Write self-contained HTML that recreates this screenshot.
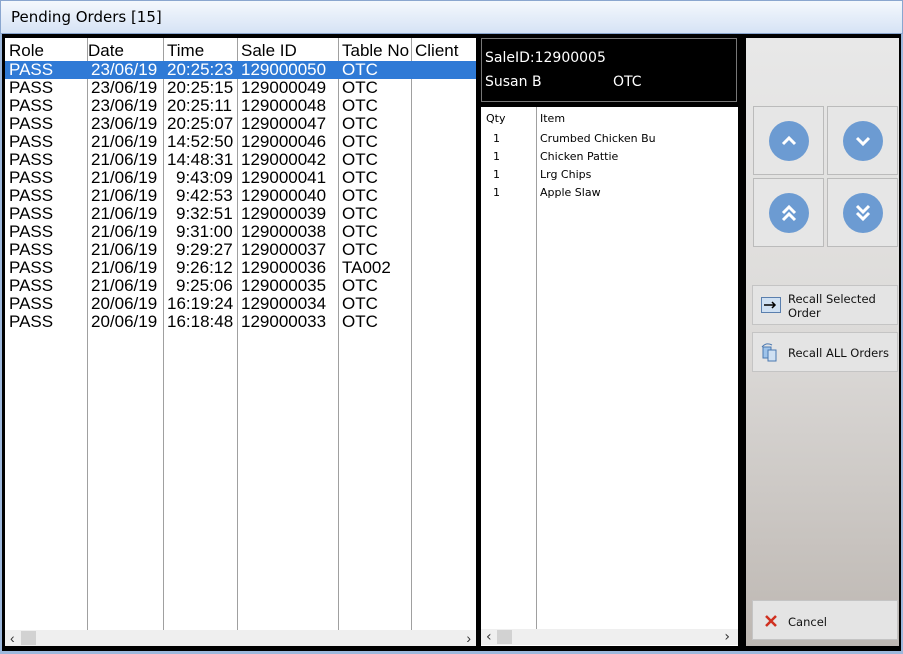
<!DOCTYPE html>
<html><head><style>
*{margin:0;padding:0;box-sizing:border-box}
body{width:903px;height:654px;overflow:hidden;background:#000;font-family:"Liberation Sans",sans-serif;position:relative}
.title{position:absolute;left:0;top:0;width:903px;height:34px;background:linear-gradient(#f4f8fd,#d6e3f5);border:1px solid #8aa6cf;font-family:"DejaVu Sans",sans-serif;font-size:15px;padding:7px 10px;color:#000}
.frame{position:absolute;left:0;top:34px;width:903px;height:620px;background:#000;border-left:2px solid #9db8dc;border-right:2px solid #9db8dc;border-bottom:3px solid #9db8dc}
.grid{position:absolute;left:5px;top:38px;width:471px;height:608px;background:#fff}
.col{position:absolute;top:0;height:592px;border-left:1px solid #a0a0a0}
.row{position:absolute;left:0;width:471px;height:18px;font-size:17px;line-height:18px;white-space:nowrap}
.row span{position:absolute;top:0}
.sel{background:#2f7ad6;color:#fff}
.hs{position:absolute;bottom:0;left:0;right:0;height:16px;background:#efefef;font-size:14px;line-height:14px;color:#333}
.info{position:absolute;left:481px;top:38px;width:256px;height:64px;background:#000;color:#fff;font-family:"DejaVu Sans",sans-serif;font-size:14px;border:1px solid #777}
.items{position:absolute;left:481px;top:107px;width:257px;height:539px;background:#fff;font-family:"DejaVu Sans",sans-serif;font-size:11px}
.items div{position:absolute}
.side{position:absolute;left:746px;top:38px;width:153px;height:608px;background:linear-gradient(#e8e8e8,#dcdad8 50%,#bdb7b2)}
.nb{position:absolute;width:71px;height:69px;background:#e6e6e6;border:1px solid #bbb}
.circ{position:absolute;left:15px;top:14px;width:40px;height:40px;border-radius:50%;background:#6c9bd2}
.btn{position:absolute;left:6px;width:146px;height:40px;background:#e4e4e4;border:1px solid #c4c4c4;font-family:"DejaVu Sans",sans-serif;font-size:11.5px;color:#111}
</style></head><body>
<div class="title">Pending Orders [15]</div>
<div class="frame"></div>
<div class="grid">
<div class="col" style="left:82px"></div><div class="col" style="left:158px"></div><div class="col" style="left:232px"></div><div class="col" style="left:333px"></div><div class="col" style="left:406px"></div>
<div class="row" style="top:4px"><span style="left:4px">Role</span><span style="left:83px">Date</span><span style="left:162px">Time</span><span style="left:236px">Sale ID</span><span style="left:337px">Table No</span><span style="left:410px">Client</span></div>
<div class="row sel" style="top:23px"><span style="left:4px">PASS</span><span style="left:86px">23/06/19</span><span style="left:162px">20:25:23</span><span style="left:236px">129000050</span><span style="left:337px">OTC</span></div>
<div class="row" style="top:41px"><span style="left:4px">PASS</span><span style="left:86px">23/06/19</span><span style="left:162px">20:25:15</span><span style="left:236px">129000049</span><span style="left:337px">OTC</span></div>
<div class="row" style="top:59px"><span style="left:4px">PASS</span><span style="left:86px">23/06/19</span><span style="left:162px">20:25:11</span><span style="left:236px">129000048</span><span style="left:337px">OTC</span></div>
<div class="row" style="top:77px"><span style="left:4px">PASS</span><span style="left:86px">23/06/19</span><span style="left:162px">20:25:07</span><span style="left:236px">129000047</span><span style="left:337px">OTC</span></div>
<div class="row" style="top:95px"><span style="left:4px">PASS</span><span style="left:86px">21/06/19</span><span style="left:162px">14:52:50</span><span style="left:236px">129000046</span><span style="left:337px">OTC</span></div>
<div class="row" style="top:113px"><span style="left:4px">PASS</span><span style="left:86px">21/06/19</span><span style="left:162px">14:48:31</span><span style="left:236px">129000042</span><span style="left:337px">OTC</span></div>
<div class="row" style="top:131px"><span style="left:4px">PASS</span><span style="left:86px">21/06/19</span><span style="left:171px">9:43:09</span><span style="left:236px">129000041</span><span style="left:337px">OTC</span></div>
<div class="row" style="top:149px"><span style="left:4px">PASS</span><span style="left:86px">21/06/19</span><span style="left:171px">9:42:53</span><span style="left:236px">129000040</span><span style="left:337px">OTC</span></div>
<div class="row" style="top:167px"><span style="left:4px">PASS</span><span style="left:86px">21/06/19</span><span style="left:171px">9:32:51</span><span style="left:236px">129000039</span><span style="left:337px">OTC</span></div>
<div class="row" style="top:185px"><span style="left:4px">PASS</span><span style="left:86px">21/06/19</span><span style="left:171px">9:31:00</span><span style="left:236px">129000038</span><span style="left:337px">OTC</span></div>
<div class="row" style="top:203px"><span style="left:4px">PASS</span><span style="left:86px">21/06/19</span><span style="left:171px">9:29:27</span><span style="left:236px">129000037</span><span style="left:337px">OTC</span></div>
<div class="row" style="top:221px"><span style="left:4px">PASS</span><span style="left:86px">21/06/19</span><span style="left:171px">9:26:12</span><span style="left:236px">129000036</span><span style="left:337px">TA002</span></div>
<div class="row" style="top:239px"><span style="left:4px">PASS</span><span style="left:86px">21/06/19</span><span style="left:171px">9:25:06</span><span style="left:236px">129000035</span><span style="left:337px">OTC</span></div>
<div class="row" style="top:257px"><span style="left:4px">PASS</span><span style="left:86px">20/06/19</span><span style="left:162px">16:19:24</span><span style="left:236px">129000034</span><span style="left:337px">OTC</span></div>
<div class="row" style="top:275px"><span style="left:4px">PASS</span><span style="left:86px">20/06/19</span><span style="left:162px">16:18:48</span><span style="left:236px">129000033</span><span style="left:337px">OTC</span></div>
<div class="hs"><span style="position:absolute;left:5px;top:1px">&lsaquo;</span><div style="position:absolute;left:16px;top:1px;width:15px;height:14px;background:#d2d2d2"></div><span style="position:absolute;right:5px;top:1px">&rsaquo;</span></div>
</div>
<div class="info"><div style="position:absolute;left:3px;top:11px">SaleID:12900005</div><div style="position:absolute;left:3px;top:35px">Susan B</div><div style="position:absolute;left:131px;top:35px">OTC</div></div>
<div class="items">
<div style="left:55px;top:0;height:522px;border-left:1px solid #a0a0a0"></div>
<div style="left:5px;top:5px">Qty</div><div style="left:59px;top:5px">Item</div>
<div style="left:12px;top:25px">1</div><div style="left:59px;top:25px">Crumbed Chicken Bu</div>
<div style="left:12px;top:43px">1</div><div style="left:59px;top:43px">Chicken Pattie</div>
<div style="left:12px;top:61px">1</div><div style="left:59px;top:61px">Lrg Chips</div>
<div style="left:12px;top:79px">1</div><div style="left:59px;top:79px">Apple Slaw</div>
<div class="hs" style="position:absolute;top:522px;left:0;width:257px"><span style="position:absolute;left:5px;top:1px">&lsaquo;</span><div style="position:absolute;left:16px;top:1px;width:15px;height:14px;background:#d2d2d2"></div><span style="position:absolute;right:8px;top:1px">&rsaquo;</span></div>
</div>
<div class="side">
<div class="nb" style="left:7px;top:68px"><div class="circ"><svg width="40" height="40"><path d="M14 23 L20 17 L26 23" stroke="#fff" stroke-width="3" fill="none"/></svg></div></div>
<div class="nb" style="left:81px;top:68px"><div class="circ"><svg width="40" height="40"><path d="M14 17 L20 23 L26 17" stroke="#fff" stroke-width="3" fill="none"/></svg></div></div>
<div class="nb" style="left:7px;top:140px"><div class="circ"><svg width="40" height="40"><path d="M14 20 L20 14 L26 20 M14 27 L20 21 L26 27" stroke="#fff" stroke-width="3" fill="none"/></svg></div></div>
<div class="nb" style="left:81px;top:140px"><div class="circ"><svg width="40" height="40"><path d="M14 13 L20 19 L26 13 M14 20 L20 26 L26 20" stroke="#fff" stroke-width="3" fill="none"/></svg></div></div>
<div class="btn" style="top:247px"><svg style="position:absolute;left:8px;top:11px" width="20" height="16"><rect x="0.5" y="0.5" width="19" height="15" fill="#cfe0f2" stroke="#5a7fae"/><path d="M3 8 H14 M11 5 L14 8 L11 11" stroke="#000" stroke-width="1.5" fill="none"/></svg><div style="position:absolute;left:35px;top:6px;line-height:14px">Recall Selected<br>Order</div></div>
<div class="btn" style="top:294px"><svg style="position:absolute;left:7px;top:9px" width="20" height="20"><rect x="3" y="5" width="8" height="11" fill="#9ec3ea" stroke="#4a78b0"/><rect x="8" y="8" width="8" height="11" fill="#cfe0f2" stroke="#4a78b0"/><path d="M2 5 Q6 0 12 3" stroke="#4a78b0" fill="none"/></svg><div style="position:absolute;left:35px;top:13px">Recall ALL Orders</div></div>
<div class="btn" style="top:562px"><svg style="position:absolute;left:11px;top:13px" width="14" height="14"><path d="M2 2 L12 12 M12 2 L2 12" stroke="#d03020" stroke-width="2.5"/></svg><div style="position:absolute;left:35px;top:14px">Cancel</div></div>
</div>
</body></html>
